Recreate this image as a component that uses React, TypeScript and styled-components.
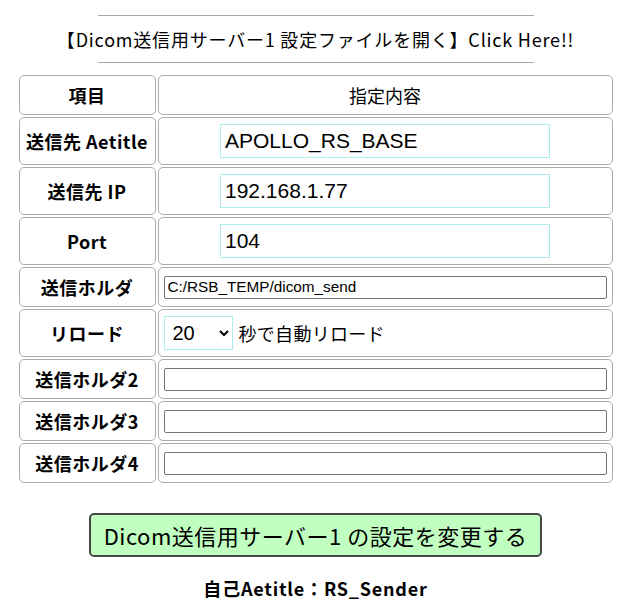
import React, { FC } from "react";
import styled, { createGlobalStyle } from "styled-components";

interface Row {
  label: string;
  kind: "wide" | "path" | "reload";
  value?: string;
}

const rows: Row[] = [
  { label: "送信先 Aetitle", kind: "wide", value: "APOLLO_RS_BASE" },
  { label: "送信先 IP", kind: "wide", value: "192.168.1.77" },
  { label: "Port", kind: "wide", value: "104" },
  { label: "送信ホルダ", kind: "path", value: "C:/RSB_TEMP/dicom_send" },
  { label: "リロード", kind: "reload" },
  { label: "送信ホルダ2", kind: "path", value: "" },
  { label: "送信ホルダ3", kind: "path", value: "" },
  { label: "送信ホルダ4", kind: "path", value: "" },
];

const App: FC = () => {
  return (
    <Page>
      <GlobalStyle />
      <Rule />
      <OpenLink href="#">【Dicom送信用サーバー1 設定ファイルを開く】Click Here!!</OpenLink>
      <Rule />
      <SettingsTable>
        <tbody>
          <tr>
            <LabelCell>項目</LabelCell>
            <ValueCell>指定内容</ValueCell>
          </tr>
          {rows.map(row => (
            <tr key={row.label}>
              <LabelCell>{row.label}</LabelCell>
              <ValueCell>
                {row.kind === "wide" && (
                  <WideInput type="text" defaultValue={row.value} />
                )}
                {row.kind === "path" && (
                  <PathInput type="text" defaultValue={row.value} />
                )}
                {row.kind === "reload" && (
                  <ReloadLine>
                    <ReloadSelect defaultValue="20">
                      <option value="10">10</option>
                      <option value="20">20</option>
                      <option value="30">30</option>
                      <option value="60">60</option>
                    </ReloadSelect>
                    秒で自動リロード
                  </ReloadLine>
                )}
              </ValueCell>
            </tr>
          ))}
        </tbody>
      </SettingsTable>
      <SubmitButton type="button">Dicom送信用サーバー1 の設定を変更する</SubmitButton>
      <SelfTitle>自己Aetitle：RS_Sender</SelfTitle>
    </Page>
  );
};

const GlobalStyle = createGlobalStyle`
  body {
    margin: 0;
    background: #ffffff;
    color: #000000;
    font-family: "Noto Sans CJK JP", "Noto Sans", sans-serif;
  }
`;

const Page = styled.div`
  display: flex;
  flex-direction: column;
  align-items: center;
  width: 631px;
  padding-top: 15px;
`;

const Rule = styled.hr`
  width: 436px;
  margin: 0;
  border: none;
  border-top: 1px solid #a8a8a8;
  height: 0;
`;

const OpenLink = styled.a`
  display: block;
  height: 46px;
  line-height: 46px;
  font-size: 18px;
  color: #000000;
  text-decoration: none;
  letter-spacing: 0.8px;
`;

const SettingsTable = styled.table`
  margin-top: 10px;
  width: 598px;
  border-collapse: separate;
  border-spacing: 2px;
  table-layout: fixed;
`;

const LabelCell = styled.td`
  width: 125px;
  padding: 5px;
  border: 1px solid #ababab;
  border-radius: 5px;
  text-align: center;
  vertical-align: middle;
  font-size: 18px;
  font-weight: 700;
  line-height: 28px;
  letter-spacing: 0.5px;
  white-space: nowrap;
`;

const ValueCell = styled.td`
  padding: 5px;
  border: 1px solid #ababab;
  border-radius: 5px;
  text-align: center;
  vertical-align: middle;
  font-size: 18px;
  line-height: 28px;
`;

const WideInput = styled.input`
  display: block;
  box-sizing: border-box;
  width: 330px;
  height: 34px;
  margin: 1px auto;
  padding: 0 4px;
  border: 1px solid paleturquoise;
  border-radius: 0;
  font-family: "Liberation Sans", Arial, sans-serif;
  font-size: 21px;
  color: #000000;
  outline: none;
`;

const PathInput = styled.input`
  display: block;
  box-sizing: border-box;
  width: 100%;
  height: 23px;
  margin: 0;
  padding: 0 3px;
  border: 1px solid #767676;
  border-radius: 2px;
  font-family: "Liberation Sans", Arial, sans-serif;
  font-size: 15.3px;
  color: #000000;
  outline: none;
`;

const ReloadLine = styled.div`
  display: flex;
  align-items: center;
  gap: 6px;
  text-align: left;
  font-size: 18px;
  letter-spacing: 0.3px;
`;

const ReloadSelect = styled.select`
  box-sizing: border-box;
  width: 69px;
  height: 34px;
  margin: 1px 0;
  padding: 0 4px;
  border: 1px solid paleturquoise;
  border-radius: 0;
  background: #ffffff;
  font-family: "Liberation Sans", Arial, sans-serif;
  font-size: 20px;
  color: #000000;
  outline: none;
`;

const SubmitButton = styled.button`
  margin-top: 28px;
  width: 453px;
  height: 44px;
  padding: 0;
  background: #c0ffc0;
  border: 2px solid #474747;
  border-radius: 5px;
  font-family: "Noto Sans CJK JP", "Noto Sans", sans-serif;
  font-size: 22px;
  color: #000000;
  letter-spacing: 0.5px;
  cursor: pointer;
`;

const SelfTitle = styled.div`
  margin-top: 17px;
  font-size: 18px;
  font-weight: 700;
  line-height: 28px;
  letter-spacing: 0.8px;
`;

export default App;
